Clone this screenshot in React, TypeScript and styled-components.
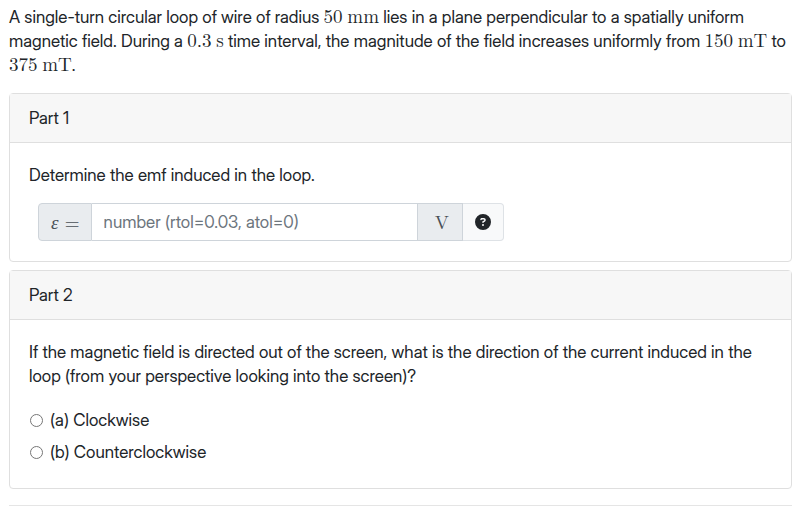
import React from "react";
import styled, { createGlobalStyle } from "styled-components";
import { FaCircleQuestion } from "react-icons/fa6";

const GlobalStyle = createGlobalStyle`
  *, *::before, *::after { box-sizing: border-box; }
  body {
    margin: 0;
    background: #fff;
    color: #212529;
    font-family: "Inter Display", Roboto, "Liberation Sans", sans-serif;
    font-size: 17px;
    line-height: 24px;
  }
`;

const Page = styled.main`
  padding: 5px 15px 0 9px;
`;

const Prompt = styled.p`
  margin: 0 0 16px;
`;

const Paragraph = styled.p`
  margin: 0 0 16px;
`;

const MathText = styled.span`
  font-family: "Latin Modern Roman", "Liberation Serif", serif;
  font-size: 19px;
  line-height: 16px;
  white-space: nowrap;
`;

const Card = styled.section`
  margin-bottom: 8px;
  border: 1px solid #dfdfdf;
  border-radius: 4px;
`;

const CardHeader = styled.h2`
  margin: 0;
  padding: 12px 19px;
  border-bottom: 1px solid #dfdfdf;
  background: #f7f7f7;
  font-size: inherit;
  font-weight: 400;
`;

const CardBody = styled.div`
  padding: 20px 19px;
`;

const InputGroup = styled.div`
  display: flex;
  width: 466px;
  max-width: 100%;
  height: 38px;
  margin-left: 9px;
`;

const Addon = styled.label`
  display: flex;
  flex: none;
  align-items: center;
  padding: 0 12px;
  border: 1px solid #ced4da;
  background: #e9ecef;
  color: #495057;
  &:first-child { padding-right: 11px; border-radius: 4px 0 0 4px; }
  &:not(:first-child) { padding: 0 13px 0 17px; }
`;

const NumberInput = styled.input`
  flex: 1;
  min-width: 0;
  padding: 6px 12px;
  border: solid #ced4da;
  border-width: 1px 0;
  border-radius: 0;
  color: #495057;
  font: inherit;
  &::placeholder { color: #6c757d; opacity: 1; }
`;

const HelpButton = styled.button`
  display: flex;
  flex: none;
  align-items: center;
  justify-content: center;
  width: 41px;
  padding: 0;
  border: 1px solid #dee2e6;
  border-left: 0;
  border-radius: 0 4px 4px 0;
  background: #f8f9fa;
  color: #212529;
  font-size: 16px;
`;

const Options = styled.div`
  display: grid;
  gap: 8px;
  padding: 4px 0;
`;

const Option = styled.label`
  display: flex;
  align-items: center;
  gap: 7px;
  input { width: 13px; height: 13px; margin: 0 0 0 1px; }
`;

const Divider = styled.hr`
  margin: 16px 0;
  border: 0;
  border-top: 1px solid #e5e5e5;
`;

export default function App() {
  return (
    <>
      <GlobalStyle />
      <Page>
        <Prompt>
          A single-turn circular loop of wire of radius <MathText>50{"\u2005"}mm</MathText> lies in a plane
          perpendicular to a spatially uniform magnetic field. During
          a <MathText>0.3{"\u2005"}s</MathText> time interval, the magnitude of the field increases
          uniformly from <MathText>150{"\u2005"}mT</MathText> to <MathText>375{"\u2005"}mT</MathText>.
        </Prompt>
        <Card>
          <CardHeader>Part 1</CardHeader>
          <CardBody>
            <Paragraph>Determine the emf induced in the loop.</Paragraph>
            <InputGroup>
              <Addon htmlFor="emf"><MathText><i>ε</i> =</MathText></Addon>
              <NumberInput id="emf" type="text" placeholder="number (rtol=0.03, atol=0)" />
              <Addon htmlFor="emf"><MathText>V</MathText></Addon>
              <HelpButton type="button" aria-label="Help">
                <FaCircleQuestion aria-hidden="true" />
              </HelpButton>
            </InputGroup>
          </CardBody>
        </Card>
        <Card>
          <CardHeader>Part 2</CardHeader>
          <CardBody>
            <Paragraph>
              If the magnetic field is directed out of the screen, what is the direction of the current
              induced in the loop (from your perspective looking into the screen)?
            </Paragraph>
            <Options>
              <Option><input type="radio" name="direction" />(a) Clockwise</Option>
              <Option><input type="radio" name="direction" />(b) Counterclockwise</Option>
            </Options>
          </CardBody>
        </Card>
        <Divider />
      </Page>
    </>
  );
}
